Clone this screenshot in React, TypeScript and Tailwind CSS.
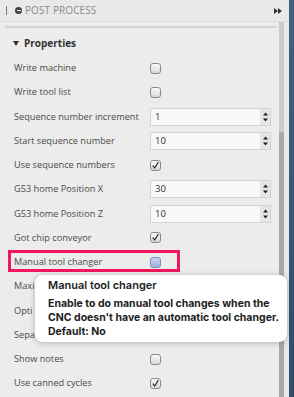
import React from "react";

type Row =
  | { label: string; kind: "check"; checked?: boolean; focus?: boolean }
  | { label: string; kind: "num"; value: string };

const rows: Row[] = [
  { label: "Write machine", kind: "check" },
  { label: "Write tool list", kind: "check" },
  { label: "Sequence number increment", kind: "num", value: "1" },
  { label: "Start sequence number", kind: "num", value: "10" },
  { label: "Use sequence numbers", kind: "check", checked: true },
  { label: "G53 home Position X", kind: "num", value: "30" },
  { label: "G53 home Position Z", kind: "num", value: "10" },
  { label: "Got chip conveyor", kind: "check", checked: true },
  { label: "Manual tool changer", kind: "check", focus: true },
  { label: "Maxi", kind: "num", value: "" },
  { label: "Opti", kind: "check" },
  { label: "Sepa", kind: "check" },
  { label: "Show notes", kind: "check" },
  { label: "Use canned cycles", kind: "check", checked: true },
];

function Check({ checked, focus }: { checked?: boolean; focus?: boolean }) {
  return (
    <div
      className={
        "w-[11px] h-[11px] rounded-[3px] border flex items-center justify-center " +
        (focus
          ? "border-[#7d8fc0] bg-gradient-to-b from-[#c8d4f0] to-[#9fb1dc]"
          : "border-[#8a8a8a] bg-gradient-to-b from-[#fafafa] to-[#d8d8d8]")
      }
    >
      {checked && (
        <svg width="9" height="9" viewBox="0 0 9 9">
          <path d="M1.8 4.6 L3.7 7 L7.4 1.2" fill="none" stroke="#333" strokeWidth="1.3" />
        </svg>
      )}
    </div>
  );
}

function Num({ value }: { value: string }) {
  return (
    <div className="w-[121px] h-[18px] flex border border-[#d2d2d2] bg-[#f8f8f8]">
      <div className="flex-1 pl-[4px] flex items-center text-[9.5px] text-[#333]">{value}</div>
      <div className="w-[10px] bg-[#e6e6e6] flex flex-col items-center justify-center gap-[2px]">
        <svg width="5" height="4" viewBox="0 0 5 4">
          <path d="M0 3.5 L2.5 0.5 L5 3.5 Z" fill="#222" />
        </svg>
        <svg width="5" height="4" viewBox="0 0 5 4">
          <path d="M0 0.5 L2.5 3.5 L5 0.5 Z" fill="#222" />
        </svg>
      </div>
    </div>
  );
}

export default function App() {
  return (
    <div
      className="w-[294px] h-[397px] relative overflow-hidden flex bg-[#ececec]"
      style={{ fontFamily: '"Open Sans", "Noto Sans", sans-serif' }}
    >
      <div className="w-[289px] h-full flex flex-col">
        {/* header */}
        <div className="h-[22px] shrink-0 flex items-center bg-[#e9e9e9] border-b border-[#dcdcdc] relative">
          <div className="ml-[6px] w-[1px] h-[9px] bg-[#777]" />
          <div className="ml-[8px] w-[7px] h-[7px] rounded-full bg-[#444] flex items-center justify-center">
            <div className="w-[4px] h-[1px] bg-white" />
          </div>
          <span className="ml-[3px] text-[10px] text-[#8a8a8a] tracking-[0.1px]">POST PROCESS</span>
          <div className="ml-auto mr-[7px] flex items-center">
            <svg width="8" height="6" viewBox="0 0 8 6">
              <path d="M0 0 L4 3 L0 6 Z M4 0 L8 3 L4 6 Z" fill="#333" />
            </svg>
          </div>
        </div>
        {/* body */}
        <div className="flex-1 flex">
          <div className="w-[279px] flex flex-col">
            <div className="mt-[4px] ml-[5px] w-[271px] h-[2px] bg-[#d2d2d2]" />
            <div className="h-[25px] mt-[3px] flex items-center pl-[13px]">
              <svg width="6" height="5" viewBox="0 0 6 5">
                <path d="M0 0 L6 0 L3 5 Z" fill="#333" />
              </svg>
              <span className="ml-[5px] text-[10px] font-bold text-[#333]">Properties</span>
            </div>
            {rows.map((r, i) => (
              <div key={i} className="h-[24.25px] shrink-0 flex items-center pl-[14px]">
                <span className="w-[136px] text-[9.2px] text-[#4a4a4a] whitespace-nowrap overflow-hidden">
                  {r.label}
                </span>
                {r.kind === "check" ? (
                  <Check checked={r.checked} focus={r.focus} />
                ) : (
                  <Num value={r.value} />
                )}
              </div>
            ))}
          </div>
          {/* scrollbar */}
          <div className="w-[5px] flex flex-col bg-[#c9c9c9]">
            <div className="h-[110px] bg-[#cacaca]" />
            <div className="flex-1 bg-[#a9a9a9]" />
          </div>
          <div className="w-[5px] bg-[#e9e9e9]" />
        </div>
      </div>
      {/* blue strip */}
      <div className="w-[5px] h-full bg-gradient-to-b from-[#3f6284] via-[#36587a] to-[#2f4e6e]" />

      {/* highlight */}
      <div className="absolute left-[8px] top-[250px] w-[172px] h-[22px] border-[3px] border-[#f0175c] pointer-events-none" />

      {/* tooltip */}
      <div
        className="absolute left-[35px] top-[275px] w-[252px] h-[67px] bg-white rounded-[8px] shadow-[0_1px_6px_rgba(0,0,0,0.25)] pl-[13px] pt-[3px] text-[#1c1c1c]"
        style={{ fontFamily: 'Inter, "Liberation Sans", sans-serif' }}
      >
        <div className="text-[11px] font-semibold leading-[15px]">Manual tool changer</div>
        <div className="mt-[4px] text-[10.5px] font-bold leading-[14px] whitespace-nowrap">
          Enable to do manual tool changes when the
          <br />
          CNC doesn't have an automatic tool changer.
          <br />
          Default: No
        </div>
      </div>
    </div>
  );
}
